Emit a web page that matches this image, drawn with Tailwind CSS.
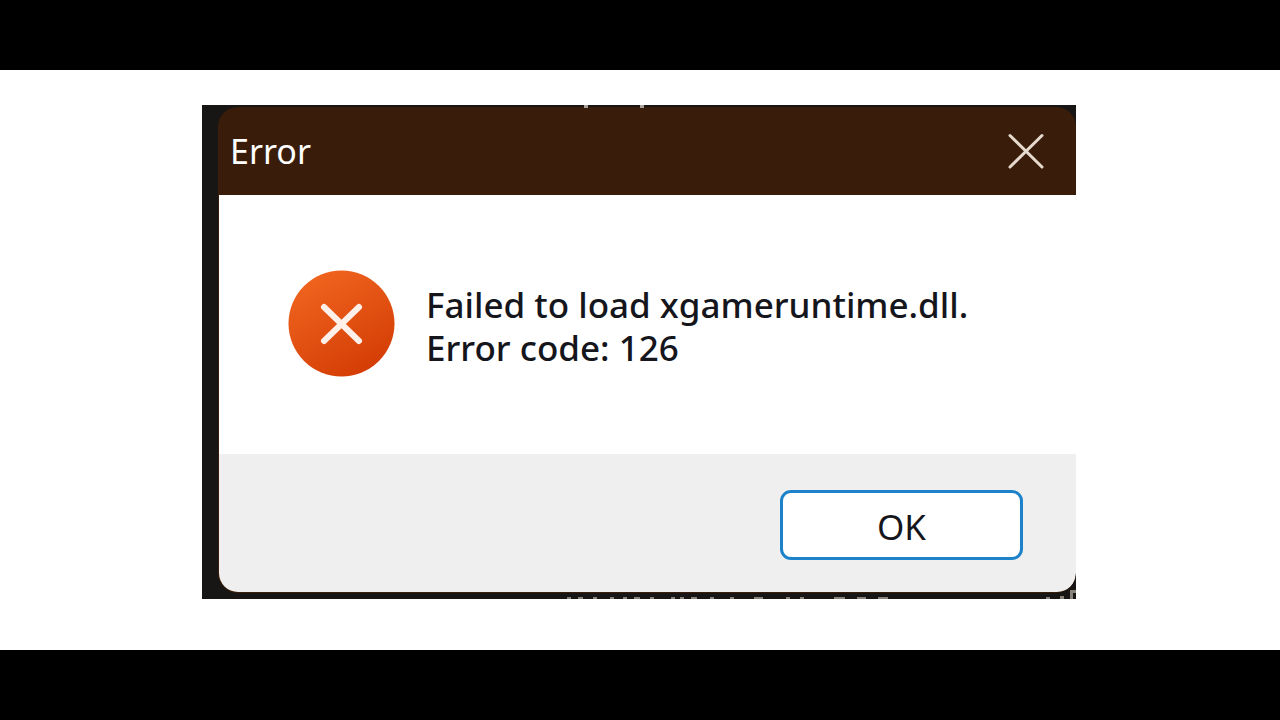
<!DOCTYPE html>
<html lang="en">
<head>
<meta charset="utf-8">
<meta name="viewport" content="width=device-width, initial-scale=1">
<title>Error</title>
<script src="https://cdn.jsdelivr.net/npm/@tailwindcss/browser@4"></script>
</head>
<body class="flex min-h-screen flex-col bg-black py-[70px] font-['Noto_Sans','Open_Sans',sans-serif] text-[#15151c]">
<main class="flex flex-1 flex-col items-center bg-white pt-[35px] pr-0.5">
  <div class="relative w-full max-w-[874px] overflow-hidden bg-[#171615] pt-0.5 pb-1.5 pl-4">
    <section role="dialog" aria-labelledby="title" aria-describedby="message" class="overflow-hidden rounded-[20px] bg-[#391d0a] pb-px">
      <header class="flex items-center justify-between pt-1 pr-8 pb-1 pl-3 text-white">
        <h1 id="title" class="text-[34px] leading-[80px]">Error</h1>
        <button type="button" aria-label="Close" class="flex">
          <svg class="size-9" viewBox="0 0 36 36" fill="none" stroke="#e6d9cd" stroke-width="3" stroke-linecap="round"><path d="M2 2.500 34 34M34 2.500 2 34"/></svg>
        </button>
      </header>
      <div class="ml-px overflow-hidden rounded-b-[19px] bg-[#efefef]">
        <div class="flex items-start gap-[31px] bg-white px-[69px] pt-[75px] pb-[77px]">
          <svg class="size-[107px] shrink-0" viewBox="0 0 107 107" fill="none" aria-hidden="true">
            <defs><linearGradient id="disc" x1="25" y1="5" x2="80" y2="105" gradientUnits="userSpaceOnUse"><stop stop-color="#f0641f"/><stop offset="1" stop-color="#d33c04"/></linearGradient></defs>
            <circle cx="53.500" cy="53.500" r="53" fill="url(#disc)"/>
            <path d="M36 37 71 71M71 37 36 71" stroke="#fff1e9" stroke-width="6" stroke-linecap="round"/>
          </svg>
          <p id="message" class="pt-[13px] text-[35px] leading-[43px] font-medium">Failed to load xgameruntime.dll.<br>Error code: 126</p>
        </div>
        <footer class="flex justify-end pt-9 pr-[53px] pb-8">
          <button type="button" class="h-[70px] w-[243px] rounded-[11px] border-[3px] border-[#1c82c9] bg-white pt-0.5 text-[35px] leading-[43px]">OK</button>
        </footer>
      </div>
    </section>
    <!-- Window contents showing past the dialog's edges -->
    <svg class="absolute top-0 left-0 h-1 w-full" viewBox="0 0 874 4" fill="#aaa39c" aria-hidden="true"><path d="M382 0h4v3h-4zM438 0h4v3h-4z"/></svg>
    <svg class="absolute bottom-0 left-0 h-1 w-full" viewBox="0 0 874 4" fill="#88827b" aria-hidden="true"><path d="M365 2h4v2h-4zM376 2h5v2h-5zM391 2h4v2h-4zM408 2h4v2h-4zM421 2h4v2h-4zM432 2h6v2h-6zM448 2h4v2h-4zM469 2h4v2h-4zM478 2h4v2h-4zM489 2h6v2h-6zM508 2h4v2h-4zM528 2h4v2h-4zM552 2h9v2h-9zM584 2h4v2h-4zM598 2h4v2h-4zM632 2h11v2h-11zM655 2h9v2h-9zM676 2h10v2h-10zM844 2h4v2h-4zM858 1h4v3h-4z"/></svg>
    <svg class="absolute right-0 bottom-0 h-9 w-5" viewBox="0 0 20 36" aria-hidden="true"><path d="M20 12C19 22 13 28 2 30H20Z" fill="#171615"/><path d="M14 27h3v9h-3zM17 27h3v3h-3z" fill="#88827b"/></svg>
  </div>
</main>
</body>
</html>
